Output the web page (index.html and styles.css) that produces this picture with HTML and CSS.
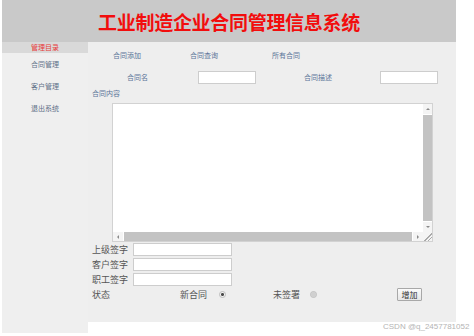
FILE: index.html
```html
<!DOCTYPE html>
<html lang="zh-CN">
<head>
<meta charset="utf-8">
<title>工业制造企业合同管理信息系统</title>
<link rel="stylesheet" href="styles.css">
</head>
<body>
<div class="page">
  <header class="header">
    <h1 class="title">工业制造企业合同管理信息系统</h1>
  </header>
  <div class="layout">
    <nav class="sidebar">
      <div class="side-head">管理目录</div>
      <a class="side-item">合同管理</a>
      <a class="side-item">客户管理</a>
      <a class="side-item">退出系统</a>
    </nav>
    <main class="main">
      <div class="tabs">
        <a class="tab tab-add">合同添加</a>
        <a class="tab tab-query">合同查询</a>
        <a class="tab tab-all">所有合同</a>
      </div>
      <div class="row-name">
        <label class="lbl lbl-name">合同名</label>
        <input class="field-sm field-name" type="text">
        <label class="lbl lbl-desc">合同描述</label>
        <input class="field-sm field-desc" type="text">
      </div>
      <div class="content-label">合同内容</div>
      <div class="editor">
        <textarea class="editor-text"></textarea>
        <div class="vbar">
          <span class="sb-btn sb-btn-up"><i class="tri tri-up"></i></span>
          <span class="sb-track"></span>
          <span class="sb-btn sb-btn-down"><i class="tri tri-down"></i></span>
        </div>
        <div class="hbar">
          <span class="sb-btn sb-btn-left"><i class="tri tri-left"></i></span>
          <span class="sb-track"></span>
          <span class="sb-btn sb-btn-right"><i class="tri tri-right"></i></span>
        </div>
        <div class="corner"></div>
      </div>
      <div class="sig-row sig-first">
        <label class="sig-label">上级签字</label>
        <input class="sig-input" type="text">
      </div>
      <div class="sig-row">
        <label class="sig-label">客户签字</label>
        <input class="sig-input" type="text">
      </div>
      <div class="sig-row">
        <label class="sig-label">职工签字</label>
        <input class="sig-input" type="text">
      </div>
      <div class="status-row">
        <span class="st-label">状态</span>
        <span class="st-opt st-new">新合同</span>
        <input class="radio radio-new" type="radio" name="status" checked>
        <span class="st-opt st-unsigned">未签署</span>
        <input class="radio radio-unsigned" type="radio" name="status">
        <button class="btn-add" type="button">增加</button>
      </div>
    </main>
  </div>
  <div class="watermark">CSDN @q_2457781052</div>
</div>
</body>
</html>
```
FILE: styles.css
```css
* { box-sizing: border-box; }

html, body {
  margin: 0;
  padding: 0;
  background: #ffffff;
}

body {
  font-family: "Noto Sans CJK SC", "Liberation Sans", sans-serif;
  width: 474px;
  height: 336px;
  overflow: hidden;
}

.page {
  position: relative;
  width: 474px;
  height: 336px;
  padding-left: 2px;
}

.header {
  width: 454px;
  height: 42px;
  background: #c9c9c9;
  display: flex;
  align-items: center;
  justify-content: center;
}

.title {
  margin: 0;
  font-size: 19px;
  line-height: 22px;
  font-weight: bold;
  color: #f20d0d;
  letter-spacing: -0.3px;
  padding-top: 1px;
}

.layout {
  display: flex;
  align-items: flex-start;
  width: 454px;
}

.sidebar {
  width: 86px;
  height: 291px;
  background: #efefef;
  display: flex;
  flex-direction: column;
}

.side-head {
  height: 11px;
  background: #d9d9d9;
  color: #e83a3a;
  font-size: 7px;
  line-height: 11px;
  padding-left: 29px;
}

.side-item {
  height: 22px;
  line-height: 22px;
  font-size: 7px;
  color: #5f7088;
  padding-left: 29px;
}

.main {
  flex: 1;
  height: 280px;
  background: #eeeeee;
  display: flex;
  flex-direction: column;
}

.tabs {
  display: flex;
  margin-top: 7px;
  height: 12px;
  padding-left: 25px;
  font-size: 7px;
  line-height: 12px;
  color: #5b7499;
}

.tab { width: 28px; white-space: nowrap; }
.tab-query { margin-left: 49px; }
.tab-all { margin-left: 54px; }

.row-name {
  display: flex;
  align-items: center;
  margin-top: 10px;
  height: 13px;
  padding-left: 39px;
  font-size: 7px;
  color: #5b7499;
}

.lbl { white-space: nowrap; line-height: 13px; }
.lbl-name { width: 21px; }
.lbl-desc { width: 28px; margin-left: 48px; }

.field-sm {
  width: 58px;
  height: 13px;
  border: 1px solid #cdcdcd;
  background: #ffffff;
  padding: 0;
  margin: 0;
}

.field-name { margin-left: 50px; }
.field-desc { margin-left: 48px; }

.content-label {
  margin-top: 4px;
  height: 10px;
  line-height: 10px;
  padding-left: 4px;
  font-size: 7px;
  color: #5b7499;
}

.editor {
  margin-top: 5px;
  margin-left: 24px;
  width: 321px;
  height: 139px;
  border: 1px solid #d2d2d2;
  background: #ffffff;
  display: grid;
  grid-template-columns: 1fr 9px;
  grid-template-rows: 1fr 9px;
}

.editor-text {
  border: none;
  resize: none;
  outline: none;
  margin: 0;
  padding: 0;
  background: #ffffff;
  overflow: hidden;
  width: 100%;
  height: 100%;
}

.vbar {
  display: flex;
  flex-direction: column;
  background: #ffffff;
}

.hbar {
  display: flex;
  background: #ffffff;
}

.sb-track {
  flex: 1;
  background: #c3c3c3;
}

.vbar .sb-track { margin: 1px 0; }
.hbar .sb-track { margin: 0 1px; }

.sb-btn {
  display: flex;
  align-items: center;
  justify-content: center;
  background: #f4f4f4;
}

.vbar .sb-btn { height: 10px; }
.hbar .sb-btn { width: 10px; }

.tri {
  display: block;
  width: 0;
  height: 0;
}

.tri-up {
  border-left: 2px solid transparent;
  border-right: 2px solid transparent;
  border-bottom: 2px solid #8a8a8a;
}

.tri-down {
  border-left: 2px solid transparent;
  border-right: 2px solid transparent;
  border-top: 2px solid #8a8a8a;
}

.tri-left {
  border-top: 2px solid transparent;
  border-bottom: 2px solid transparent;
  border-right: 2px solid #8a8a8a;
}

.tri-right {
  border-top: 2px solid transparent;
  border-bottom: 2px solid transparent;
  border-left: 2px solid #8a8a8a;
}

.corner {
  background:
    linear-gradient(135deg, transparent 55%, #a9a9a9 55%, #a9a9a9 62%, transparent 62%, transparent 75%, #a9a9a9 75%, #a9a9a9 82%, transparent 82%),
    #f4f4f4;
}

.sig-row {
  display: flex;
  align-items: center;
  margin-top: 2px;
  height: 13px;
  padding-left: 4px;
}

.sig-first { margin-top: 1px; }

.sig-label {
  width: 41px;
  font-size: 9px;
  line-height: 13px;
  color: #555555;
  white-space: nowrap;
}

.sig-input {
  width: 99px;
  height: 13px;
  border: 1px solid #cdcdcd;
  background: #ffffff;
  padding: 0;
  margin: 0;
}

.status-row {
  display: flex;
  align-items: center;
  margin-top: 2px;
  height: 13px;
  padding-left: 4px;
  font-size: 9px;
  color: #555555;
}

.st-label { width: 18px; white-space: nowrap; }
.st-opt { width: 27px; white-space: nowrap; }
.st-new { margin-left: 70px; }
.st-unsigned { margin-left: 47px; }

.radio {
  -webkit-appearance: none;
  appearance: none;
  width: 7px;
  height: 7px;
  margin: 0;
  border-radius: 50%;
  border: 1px solid #bdbdbd;
  background: #e4e4e4;
}

.radio-new {
  margin-left: 12px;
  background: radial-gradient(circle, #4a4a4a 0 1.3px, #f2f2f2 1.6px);
}

.radio-unsigned {
  margin-left: 10px;
  background: radial-gradient(circle, #d0d0d0 0 2px, #e6e6e6 2.5px);
}

.btn-add {
  margin-left: 80px;
  width: 25px;
  height: 13px;
  padding: 0;
  border: 1px solid #a8a8a8;
  border-radius: 1px;
  background: linear-gradient(#fbfbfb, #e6e6e6);
  font-family: "Noto Sans CJK SC", sans-serif;
  font-size: 8px;
  line-height: 11px;
  color: #333333;
}

.watermark {
  position: absolute;
  left: 383px;
  top: 322px;
  font-family: "Liberation Sans", sans-serif;
  font-size: 8px;
  line-height: 10px;
  color: #b4b4b4;
  white-space: nowrap;
}
```
